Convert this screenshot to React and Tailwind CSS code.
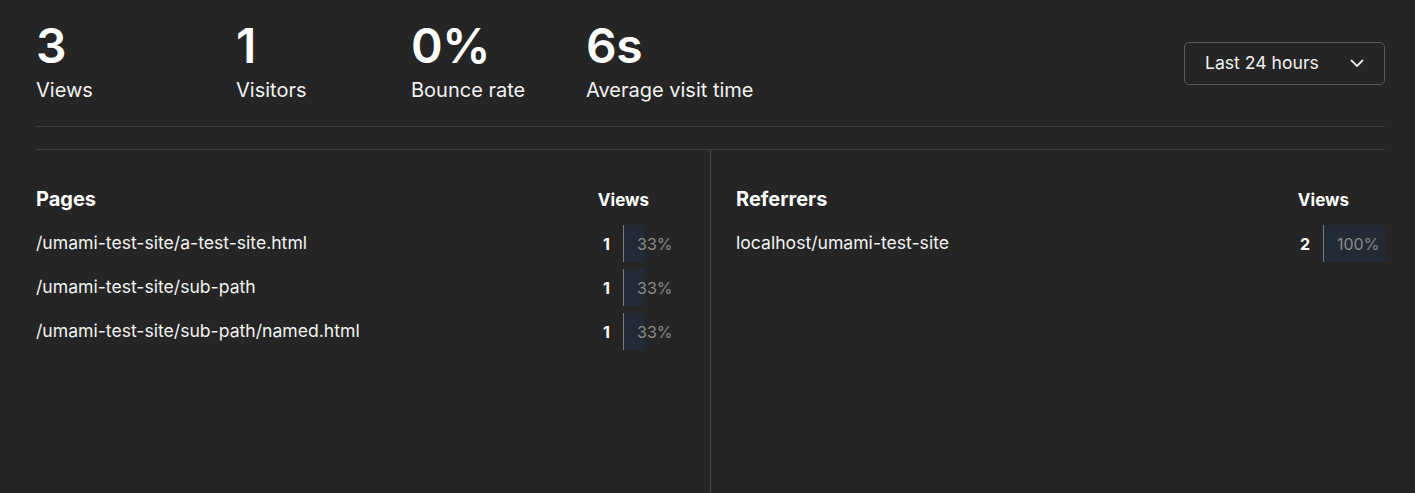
import React from "react";

const metrics = [
  { value: "3", label: "Views", w: "w-[200px]" },
  { value: "1", label: "Visitors", w: "w-[175px]" },
  { value: "0%", label: "Bounce rate", w: "w-[175px]" },
  { value: "6s", label: "Average visit time", w: "w-[200px]" },
];

function Row({ label, count, pct }) {
  return (
    <div className="flex items-center h-[37px] mb-[7px]">
      <div className="flex-1 text-[17.6px] text-[#f2f2f2] truncate">{label}</div>
      <div className="pr-[13px] text-[16px] font-bold text-white">{count}</div>
      <div className="relative w-[62px] h-[37px] border-l border-[#7a7a7a]">
        <div className="absolute left-0 top-0 bottom-0 bg-[#222a35]" style={{ width: `${pct}%` }} />
        <div className="absolute inset-0 flex items-center pl-[13px] text-[16px] text-[#8a8a8a]">{pct}%</div>
      </div>
    </div>
  );
}

function Panel({ title, rows, className }) {
  return (
    <div className={className}>
      <div className="flex items-baseline justify-between pt-[37px] mb-[13px]">
        <div className="text-[20px] leading-[24px] font-bold text-white">{title}</div>
        <div className="text-[17px] leading-[24px] font-bold text-white mr-[36px]">Views</div>
      </div>
      {rows.map((r) => (
        <Row key={r.label} {...r} />
      ))}
    </div>
  );
}

export default function App() {
  return (
    <div
      className="w-[1415px] h-[493px] bg-[#252525] text-white pl-[36px] pr-[30px] overflow-hidden"
      style={{ fontFamily: "Inter, 'Noto Sans', sans-serif" }}
    >
      <div className="flex items-start justify-between pt-[22px] pb-[24px] border-b border-[#3e3e3e]">
        <div className="flex">
          {metrics.map((m) => (
            <div key={m.label} className={`${m.w} flex flex-col`}>
              <div className="text-[48px] leading-none h-[48px] font-semibold tracking-[-0.5px]">{m.value}</div>
              <div className="text-[20px] leading-[24px] mt-[8px] text-[#f2f2f2]">{m.label}</div>
            </div>
          ))}
        </div>
        <div className="mt-[20px] flex items-center justify-between w-[201px] h-[43px] border border-[#5a5a5a] rounded-[5px] pl-[20px] pr-[20px] text-[17.6px] text-[#f2f2f2]">
          <span>Last 24 hours</span>
          <svg width="14" height="9" viewBox="0 0 14 9" fill="none">
            <path d="M1.5 1.5 L7 7 L12.5 1.5" stroke="#e6e6e6" strokeWidth="1.8" strokeLinecap="round" strokeLinejoin="round" />
          </svg>
        </div>
      </div>
      <div className="mt-[22px] border-t border-[#3e3e3e] grid grid-cols-[675px_1fr] h-[400px]">
        <Panel
          title="Pages"
          className="pr-[25px] border-r border-[#444444]"
          rows={[
            { label: "/umami-test-site/a-test-site.html", count: 1, pct: 33 },
            { label: "/umami-test-site/sub-path", count: 1, pct: 33 },
            { label: "/umami-test-site/sub-path/named.html", count: 1, pct: 33 },
          ]}
        />
        <Panel
          title="Referrers"
          className="pl-[25px]"
          rows={[{ label: "localhost/umami-test-site", count: 2, pct: 100 }]}
        />
      </div>
    </div>
  );
}
